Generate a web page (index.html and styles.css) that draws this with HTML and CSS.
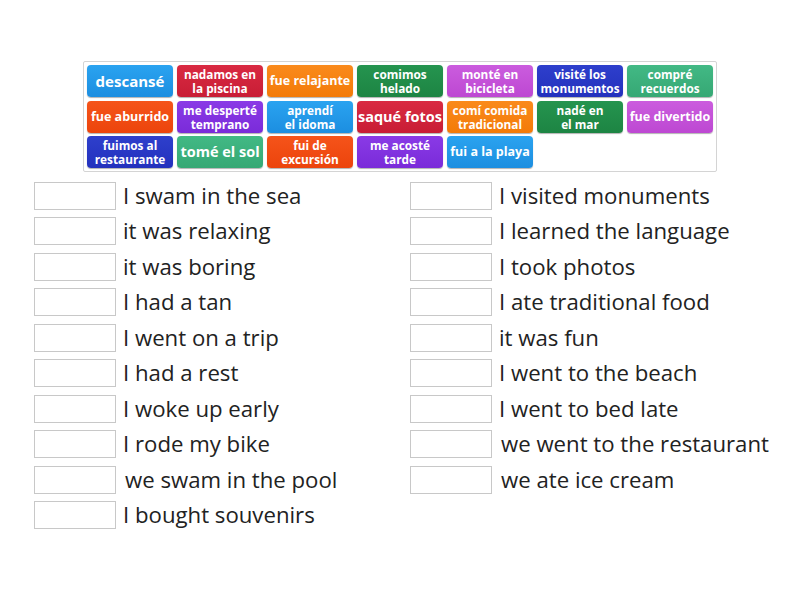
FILE: index.html
```html
<!DOCTYPE html>
<html>
<head>
<meta charset="utf-8">
<link rel="stylesheet" href="styles.css">
</head>
<body>
<div class="bank">
  <div class="tile c1 big">descansé</div>
  <div class="tile c2">nadamos en<br>la piscina</div>
  <div class="tile c3 one">fue relajante</div>
  <div class="tile c4">comimos<br>helado</div>
  <div class="tile c5">monté en<br>bicicleta</div>
  <div class="tile c6">visité los<br>monumentos</div>
  <div class="tile c7">compré<br>recuerdos</div>
  <div class="tile c8 one">fue aburrido</div>
  <div class="tile c9">me desperté<br>temprano</div>
  <div class="tile c1">aprendí<br>el idoma</div>
  <div class="tile c2 mid">saqué fotos</div>
  <div class="tile c3">comí comida<br>tradicional</div>
  <div class="tile c4">nadé en<br>el mar</div>
  <div class="tile c5 one">fue divertido</div>
  <div class="tile c6">fuimos al<br>restaurante</div>
  <div class="tile c7 mid">tomé el sol</div>
  <div class="tile c8">fui de<br>excursión</div>
  <div class="tile c9">me acosté<br>tarde</div>
  <div class="tile c1 one">fui a la playa</div>
</div>
<div class="lists">
  <div class="col">
    <div class="row"><div class="box"></div><span class="label">I swam in the sea</span></div>
    <div class="row"><div class="box"></div><span class="label">it was relaxing</span></div>
    <div class="row"><div class="box"></div><span class="label">it was boring</span></div>
    <div class="row"><div class="box"></div><span class="label">I had a tan</span></div>
    <div class="row"><div class="box"></div><span class="label">I went on a trip</span></div>
    <div class="row"><div class="box"></div><span class="label">I had a rest</span></div>
    <div class="row"><div class="box"></div><span class="label">I woke up early</span></div>
    <div class="row"><div class="box"></div><span class="label">I rode my bike</span></div>
    <div class="row"><div class="box"></div><span class="label shift">we swam in the pool</span></div>
    <div class="row"><div class="box"></div><span class="label">I bought souvenirs</span></div>
  </div>
  <div class="col">
    <div class="row"><div class="box"></div><span class="label">I visited monuments</span></div>
    <div class="row"><div class="box"></div><span class="label">I learned the language</span></div>
    <div class="row"><div class="box"></div><span class="label">I took photos</span></div>
    <div class="row"><div class="box"></div><span class="label">I ate traditional food</span></div>
    <div class="row"><div class="box"></div><span class="label">it was fun</span></div>
    <div class="row"><div class="box"></div><span class="label">I went to the beach</span></div>
    <div class="row"><div class="box"></div><span class="label">I went to bed late</span></div>
    <div class="row"><div class="box"></div><span class="label shift">we went to the restaurant</span></div>
    <div class="row"><div class="box"></div><span class="label shift">we ate ice cream</span></div>
  </div>
</div>
</body>
</html>
```
FILE: styles.css
```css
html, body {
  margin: 0;
  padding: 0;
  background: #ffffff;
}
body {
  font-family: "Open Sans", "DejaVu Sans", sans-serif;
}
.bank {
  width: 626px;
  margin: 61px auto 0 auto;
  padding: 3px;
  border: 1px solid #d4d4d4;
  border-radius: 2px;
  display: grid;
  grid-template-columns: repeat(7, 86px);
  grid-auto-rows: 32px;
  column-gap: 4px;
  row-gap: 3.5px;
}
.tile {
  display: flex;
  align-items: center;
  justify-content: center;
  text-align: center;
  color: #ffffff;
  font-weight: 700;
  font-size: 11.8px;
  line-height: 14px;
  border-radius: 4px;
  box-shadow: 0 1px 1px rgba(0,0,0,0.3);
  white-space: nowrap;
  overflow: hidden;
}
.tile.one { font-size: 12.5px; }
.tile.mid { font-size: 14.5px; }
.tile.big { font-size: 15px; }
.c1 { background: linear-gradient(#2aa3f0, #1c8ee0); }
.c2 { background: linear-gradient(#d92a42, #c81d35); }
.c3 { background: linear-gradient(#fa8a1c, #f37a08); }
.c4 { background: linear-gradient(#25944f, #1d8443); }
.c5 { background: linear-gradient(#cb5cde, #bd48d2); }
.c6 { background: linear-gradient(#2e3fcc, #2331bd); }
.c7 { background: linear-gradient(#42b985, #36a874); }
.c8 { background: linear-gradient(#f5541a, #ec440c); }
.c9 { background: linear-gradient(#8a3ae6, #7a2bd9); }

.lists {
  display: flex;
  padding-left: 34px;
  margin-top: 9.5px;
}
.col {
  width: 376px;
  display: flex;
  flex-direction: column;
  gap: 7.5px;
}
.row {
  display: flex;
  align-items: center;
  height: 28px;
}
.box {
  width: 80px;
  height: 26px;
  border: 1px solid #c8c8c8;
  flex: none;
}
.label {
  margin-left: 7px;
  font-size: 22.2px;
  color: #222222;
  white-space: nowrap;
  line-height: 28px;
}
.label.shift { margin-left: 9px; }
```
